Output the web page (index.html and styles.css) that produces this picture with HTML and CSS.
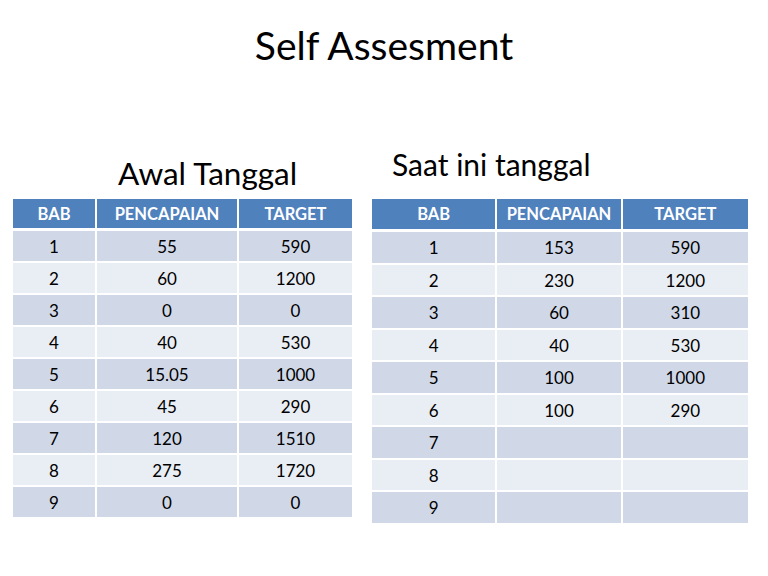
FILE: index.html
```html
<!DOCTYPE html>
<html>
<head>
<meta charset="utf-8">
<link rel="stylesheet" href="styles.css">
</head>
<body>
<div class="slide">
  <h1 class="title">Self Assesment</h1>
  <div class="panels">
    <section class="panel panel-left">
      <h2 class="heading heading-left">Awal Tanggal</h2>
      <table class="grid grid-left">
        <thead><tr><th>BAB</th><th>PENCAPAIAN</th><th>TARGET</th></tr></thead>
        <tbody>
          <tr><td>1</td><td>55</td><td>590</td></tr>
          <tr><td>2</td><td>60</td><td>1200</td></tr>
          <tr><td>3</td><td>0</td><td>0</td></tr>
          <tr><td>4</td><td>40</td><td>530</td></tr>
          <tr><td>5</td><td>15.05</td><td>1000</td></tr>
          <tr><td>6</td><td>45</td><td>290</td></tr>
          <tr><td>7</td><td>120</td><td>1510</td></tr>
          <tr><td>8</td><td>275</td><td>1720</td></tr>
          <tr><td>9</td><td>0</td><td>0</td></tr>
        </tbody>
      </table>
    </section>
    <section class="panel panel-right">
      <h2 class="heading heading-right">Saat ini tanggal</h2>
      <table class="grid grid-right">
        <thead><tr><th>BAB</th><th>PENCAPAIAN</th><th>TARGET</th></tr></thead>
        <tbody>
          <tr><td>1</td><td>153</td><td>590</td></tr>
          <tr><td>2</td><td>230</td><td>1200</td></tr>
          <tr><td>3</td><td>60</td><td>310</td></tr>
          <tr><td>4</td><td>40</td><td>530</td></tr>
          <tr><td>5</td><td>100</td><td>1000</td></tr>
          <tr><td>6</td><td>100</td><td>290</td></tr>
          <tr><td>7</td><td></td><td></td></tr>
          <tr><td>8</td><td></td><td></td></tr>
          <tr><td>9</td><td></td><td></td></tr>
        </tbody>
      </table>
    </section>
  </div>
</div>
</body>
</html>
```
FILE: styles.css
```css
html, body {
  margin: 0;
  padding: 0;
  background: #ffffff;
}
.slide {
  width: 768px;
  height: 576px;
  font-family: Lato, "Liberation Sans", sans-serif;
  color: #000000;
  overflow: hidden;
}
.title {
  margin: 0;
  padding-top: 20px;
  height: 52px;
  font-size: 39px;
  font-weight: normal;
  line-height: 50px;
  text-align: center;
}
.panels {
  display: flex;
  padding-left: 13px;
  gap: 20px;
}
.panel {
  display: flex;
  flex-direction: column;
}
.panel-left { width: 339px; }
.panel-right { width: 376px; }
.heading {
  margin: 0;
  font-weight: normal;
  height: 127px;
  display: flex;
  align-items: flex-end;
  box-sizing: border-box;
  line-height: 36px;
}
.heading-left { font-size: 31.5px; padding-left: 105px; padding-bottom: 8px; }
.heading-right { font-size: 30px; padding-left: 20px; padding-bottom: 17px; }
.grid {
  border-collapse: separate;
  border-spacing: 0;
  width: 100%;
  table-layout: fixed;
}
.grid th, .grid td {
  box-sizing: border-box;
  padding: 0;
  text-align: center;
  border-right: 2px solid #ffffff;
  border-bottom: 2px solid #ffffff;
}
.grid th:last-child, .grid td:last-child { border-right: none; }
.grid tbody tr:last-child td { border-bottom: none; }
.grid th {
  background: #4f81bd;
  color: #ffffff;
  font-weight: bold;
  font-size: 16.5px;
  height: 32px;
  border-bottom-width: 3px;
}
.grid td {
  font-size: 17px;
}
.grid tbody tr:nth-child(odd) td { background: #d0d8e8; }
.grid tbody tr:nth-child(even) td { background: #e9edf4; }
.grid-left td { height: 32px; }
.grid-left tbody tr:last-child td { height: 30px; }
.grid-right th { height: 33px; }
.grid-right tbody tr:nth-child(odd) td { height: 33px; }
.grid-right tbody tr:nth-child(even) td { height: 32px; }
.grid-right tbody tr:last-child td { height: 31px; }
.grid-left th:nth-child(1) { width: 84px; }
.grid-left th:nth-child(2) { width: 142px; }
.grid-left th:nth-child(3) { width: 113px; }
```
